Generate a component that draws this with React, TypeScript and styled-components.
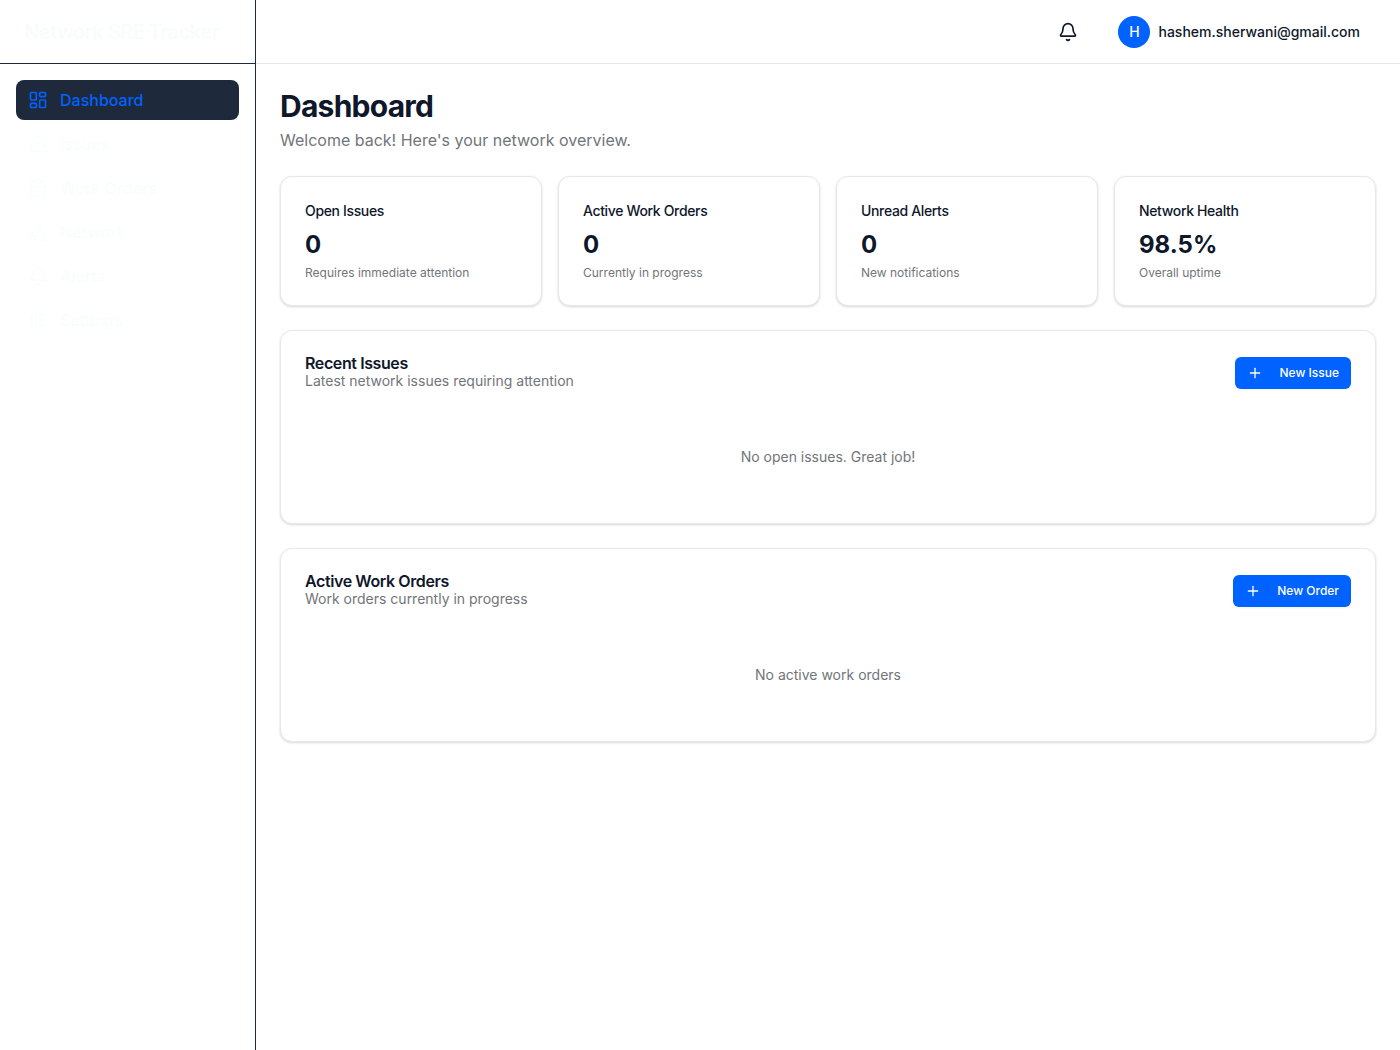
import React from "react";
import styled, { createGlobalStyle } from "styled-components";
import {
  LayoutDashboard,
  TriangleAlert,
  ClipboardList,
  Network,
  Bell,
  Settings,
  Plus,
} from "lucide-react";

const Global = createGlobalStyle`
  *, *::before, *::after { box-sizing: border-box; }
  body {
    margin: 0;
    background: #ffffff;
    color: #0f172a;
    font-family: Inter, "Liberation Sans", sans-serif;
    font-size: 16px;
    line-height: 24px;
  }
  h1, h2, h3, p { margin: 0; }
  button { font-family: inherit; cursor: pointer; }
`;

const Shell = styled.div`
  display: flex;
  min-height: 100vh;
`;

const Sidebar = styled.aside`
  flex: 0 0 256px;
  border-right: 1px solid #1e293b;
`;

const Brand = styled.div`
  display: flex;
  align-items: center;
  height: 64px;
  padding: 0 24px;
  border-bottom: 1px solid #1e293b;
  color: #fafcfc;
  font-size: 20px;
  font-weight: 600;
  letter-spacing: -0.025em;
  white-space: nowrap;
`;

const Nav = styled.nav`
  display: flex;
  flex-direction: column;
  gap: 4px;
  padding: 16px;
`;

const NavLink = styled.a<{ $active?: boolean }>`
  display: flex;
  align-items: center;
  gap: 12px;
  height: 40px;
  padding: 0 12px;
  border-radius: 8px;
  background: ${(p) => (p.$active ? "#1e293b" : "transparent")};
  color: ${(p) => (p.$active ? "#0062ff" : "#fbfdfd")};
  font-weight: 500;
  text-decoration: none;
`;

const Content = styled.div`
  flex: 1;
  min-width: 0;
`;

const TopBar = styled.header`
  display: flex;
  align-items: center;
  justify-content: flex-end;
  gap: 24px;
  height: 64px;
  padding: 0 24px;
  border-bottom: 1px solid #e5e7eb;
`;

const IconButton = styled.button`
  display: grid;
  place-items: center;
  width: 36px;
  height: 36px;
  padding: 0;
  border: 0;
  background: none;
  color: #0f172a;
`;

const UserButton = styled.button`
  display: flex;
  align-items: center;
  gap: 8px;
  padding: 0 16px 0 8px;
  border: 0;
  background: none;
  color: #0f172a;
  font-size: 14px;
  font-weight: 500;
  line-height: 20px;
`;

const Avatar = styled.span`
  display: grid;
  place-items: center;
  width: 32px;
  height: 32px;
  border-radius: 50%;
  background: #0062ff;
  color: #ffffff;
`;

const Main = styled.main`
  display: flex;
  flex-direction: column;
  gap: 24px;
  padding: 24px;
`;

const PageTitle = styled.h1`
  font-size: 30px;
  font-weight: 700;
  line-height: 36px;
  letter-spacing: -0.025em;
`;

const PageLead = styled.p`
  margin-top: 4px;
  color: #71757a;
`;

const Stats = styled.section`
  display: grid;
  grid-template-columns: repeat(4, 1fr);
  gap: 16px;
`;

const Card = styled.section`
  padding: 24px;
  border: 1px solid #e5e7eb;
  border-radius: 12px;
  background: #ffffff;
  box-shadow: 0 1px 3px rgba(0, 0, 0, 0.1), 0 1px 2px rgba(0, 0, 0, 0.06);
`;

const StatTitle = styled.h3`
  font-size: 14px;
  font-weight: 500;
  line-height: 20px;
  letter-spacing: -0.025em;
`;

const StatValue = styled.p`
  margin-top: 8px;
  font-size: 24px;
  font-weight: 700;
  line-height: 32px;
`;

const StatNote = styled.p`
  margin-top: 4px;
  color: #71757a;
  font-size: 12px;
  line-height: 16px;
`;

const CardHeader = styled.div`
  display: flex;
  align-items: center;
  justify-content: space-between;
`;

const CardTitle = styled.h2`
  font-size: 16px;
  font-weight: 600;
  line-height: 16px;
  letter-spacing: -0.025em;
`;

const CardNote = styled.p`
  color: #71757a;
  font-size: 14px;
  line-height: 20px;
`;

const PrimaryButton = styled.button`
  display: flex;
  align-items: center;
  gap: 16px;
  height: 32px;
  padding: 0 12px;
  border: 0;
  border-radius: 6px;
  background: #0062ff;
  color: #ffffff;
  font-size: 12px;
  font-weight: 500;
  line-height: 16px;
  box-shadow: 0 1px 2px rgba(0, 0, 0, 0.05);
`;

const Empty = styled.p`
  padding: 56px 0 32px;
  color: #71757a;
  font-size: 14px;
  line-height: 20px;
  text-align: center;
`;

const navItems = [
  { label: "Dashboard", icon: LayoutDashboard, active: true },
  { label: "Issues", icon: TriangleAlert },
  { label: "Work Orders", icon: ClipboardList },
  { label: "Network", icon: Network },
  { label: "Alerts", icon: Bell },
  { label: "Settings", icon: Settings },
];

const stats = [
  { title: "Open Issues", value: "0", note: "Requires immediate attention" },
  { title: "Active Work Orders", value: "0", note: "Currently in progress" },
  { title: "Unread Alerts", value: "0", note: "New notifications" },
  { title: "Network Health", value: "98.5%", note: "Overall uptime" },
];

const panels = [
  {
    title: "Recent Issues",
    note: "Latest network issues requiring attention",
    action: "New Issue",
    empty: "No open issues. Great job!",
  },
  {
    title: "Active Work Orders",
    note: "Work orders currently in progress",
    action: "New Order",
    empty: "No active work orders",
  },
];

export default function App() {
  return (
    <>
      <Global />
      <Shell>
        <Sidebar>
          <Brand>Network SRE Tracker</Brand>
          <Nav aria-label="Main">
            {navItems.map(({ label, icon: Icon, active }) => (
              <NavLink key={label} href="#" $active={active}>
                <Icon size={20} aria-hidden />
                {label}
              </NavLink>
            ))}
          </Nav>
        </Sidebar>
        <Content>
          <TopBar>
            <IconButton aria-label="Notifications">
              <Bell size={20} />
            </IconButton>
            <UserButton>
              <Avatar>H</Avatar>
              hashem.sherwani@gmail.com
            </UserButton>
          </TopBar>
          <Main>
            <div>
              <PageTitle>Dashboard</PageTitle>
              <PageLead>Welcome back! Here's your network overview.</PageLead>
            </div>
            <Stats>
              {stats.map((s) => (
                <Card key={s.title}>
                  <StatTitle>{s.title}</StatTitle>
                  <StatValue>{s.value}</StatValue>
                  <StatNote>{s.note}</StatNote>
                </Card>
              ))}
            </Stats>
            {panels.map((p) => (
              <Card key={p.title}>
                <CardHeader>
                  <div>
                    <CardTitle>{p.title}</CardTitle>
                    <CardNote>{p.note}</CardNote>
                  </div>
                  <PrimaryButton>
                    <Plus size={16} aria-hidden />
                    {p.action}
                  </PrimaryButton>
                </CardHeader>
                <Empty>{p.empty}</Empty>
              </Card>
            ))}
          </Main>
        </Content>
      </Shell>
    </>
  );
}
